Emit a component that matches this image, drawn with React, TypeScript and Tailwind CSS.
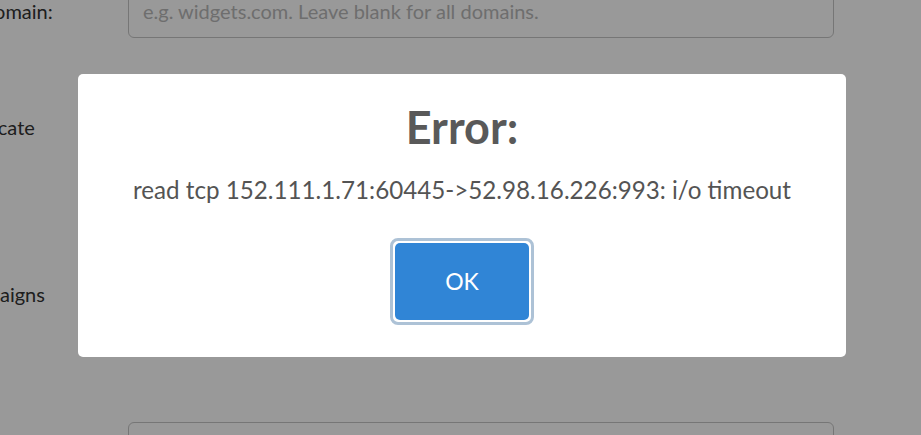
export default function App() {
  return (
    <div className="relative h-[435px] w-[921px] overflow-hidden bg-white font-['Lato','Liberation_Sans',sans-serif]">
      {/* form behind the dialog */}
      <div className="flex flex-col">
        <div className="-mt-[24px] flex h-[62px] items-center">
          <div className="-ml-[21px] mt-[8px] w-[149px] text-[20px] text-[#333]">Domain:</div>
          <div className="flex h-[62px] w-[706px] items-center rounded-[6px] border border-[#c5c5c5] px-[14px] pt-[8px] text-[20px] text-[#b8b8b8]">
            e.g. widgets.com. Leave blank for all domains.
          </div>
        </div>
        <div className="mt-[75px] -ml-[57px] text-[20px] leading-[28px] text-[#333]">Certificate</div>
        <div className="mt-[139px] -ml-[51px] text-[20px] leading-[28px] text-[#333]">Campaigns</div>
        <div className="mt-[114px] ml-[128px] h-[60px] w-[706px] rounded-[6px] border border-[#c5c5c5]"></div>
      </div>

      {/* overlay */}
      <div className="absolute inset-0 flex items-start justify-center bg-black/40 pl-[3px] pt-[74px]">
        <div className="flex h-[283px] w-[768px] flex-col items-center rounded-[5px] bg-white">
          <h2 className="mt-[26px] text-[45px] font-bold leading-[54px] text-[#595959]">Error:</h2>
          <p className="mt-[20px] text-[24.2px] leading-[32px] text-[#545454]">
            read tcp 152.111.1.71:60445-&gt;52.98.16.226:993: i/o timeout
          </p>
          <button className="mt-[32px] flex h-[87px] w-[144px] items-center justify-center rounded-[8px] border-[3px] border-[#adc2d6] p-[2px]">
            <span className="flex h-full w-full items-center justify-center rounded-[5px] bg-[#3085d6] text-[23px] text-white">
              OK
            </span>
          </button>
        </div>
      </div>
    </div>
  );
}
